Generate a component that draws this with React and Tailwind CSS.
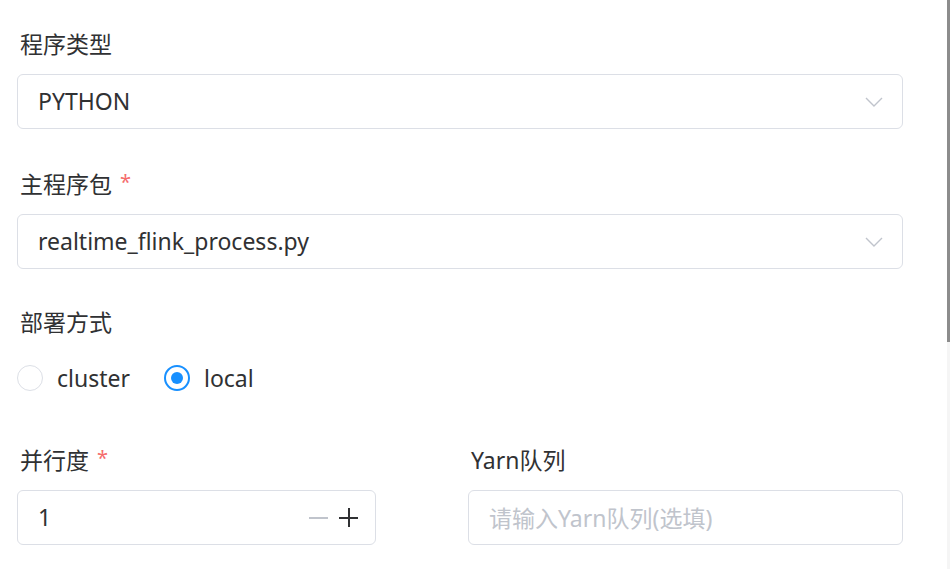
import React, { useState } from 'react';

const font = { fontFamily: '"Noto Sans", "Noto Sans CJK SC", sans-serif' };

const Chevron = () => (
  <svg width="18" height="10" viewBox="0 0 18 10" fill="none" className="shrink-0">
    <path d="M1 1l8 8 8-8" stroke="#c0c4cc" strokeWidth="1.4" />
  </svg>
);

const Label = ({ children, required }) => (
  <div className="h-[28px] pl-[3px] mb-[16px] flex items-center text-[23px] leading-[28px] text-[#303133]">
    {children}
    {required && <span className="ml-[8px] text-[20px] text-[#f56c6c] self-start leading-[24px]">*</span>}
  </div>
);

const SelectBox = ({ value }) => (
  <div className="h-[55px] w-full rounded-[6px] border border-[#dcdfe6] bg-white flex items-center justify-between pl-[20px] pr-[19px] text-[23px] text-[#303133]">
    <span>{value}</span>
    <Chevron />
  </div>
);

const Radio = ({ checked, label, onClick }) => (
  <button onClick={onClick} className="flex items-center gap-[14px] text-[23px] text-[#303133]">
    {checked ? (
      <span className="w-[26px] h-[26px] rounded-full border-[2px] border-[#1890ff] flex items-center justify-center">
        <span className="w-[12px] h-[12px] rounded-full bg-[#1890ff]" />
      </span>
    ) : (
      <span className="w-[26px] h-[26px] rounded-full border-[1.5px] border-[#dcdfe6] bg-white" />
    )}
    <span>{label}</span>
  </button>
);

export default function App() {
  const [mode, setMode] = useState('local');
  const [count, setCount] = useState(1);

  return (
    <div className="w-[950px] h-[569px] overflow-hidden flex bg-white" style={font}>
      <div className="flex-1 pl-[17px] pr-[44px] pt-[30px]">
        <Label>程序类型</Label>
        <SelectBox value="PYTHON" />

        <div className="mt-[41px]">
          <Label required>主程序包</Label>
          <SelectBox value="realtime_flink_process.py" />
        </div>

        <div className="mt-[39px]">
          <Label>部署方式</Label>
          <div className="h-[52px] flex items-center gap-[34px]">
            <Radio label="cluster" checked={mode === 'cluster'} onClick={() => setMode('cluster')} />
            <Radio label="local" checked={mode === 'local'} onClick={() => setMode('local')} />
          </div>
        </div>

        <div className="mt-[42px] flex gap-[92px]">
          <div className="w-[359px]">
            <Label required>并行度</Label>
            <div className="h-[55px] rounded-[6px] border border-[#dcdfe6] bg-white flex items-center justify-between pl-[20px] pr-[17px] text-[23px] text-[#303133]">
              <span>{count}</span>
              <div className="flex items-center gap-[11px]">
                <button onClick={() => setCount(Math.max(1, count - 1))} className="w-[19px] h-[19px] flex items-center">
                  <span className="w-full h-[2px] bg-[#c0c4cc]" />
                </button>
                <button onClick={() => setCount(count + 1)} className="w-[19px] h-[19px] relative flex items-center justify-center">
                  <span className="w-full h-[2px] bg-[#303133]" />
                  <span className="absolute left-[8.5px] top-0 w-[2px] h-full bg-[#303133]" />
                </button>
              </div>
            </div>
          </div>
          <div className="flex-1">
            <Label>Yarn队列</Label>
            <input
              placeholder="请输入Yarn队列(选填)"
              className="h-[55px] w-full rounded-[6px] border border-[#dcdfe6] bg-white px-[20px] text-[23px] text-[#303133] placeholder:text-[#c0c4cc] outline-none"
            />
          </div>
        </div>
      </div>
      <div className="w-[3px] bg-[#f5f5f5]">
        <div className="w-full h-[342px] bg-[#8c8c8c]" />
      </div>
    </div>
  );
}
